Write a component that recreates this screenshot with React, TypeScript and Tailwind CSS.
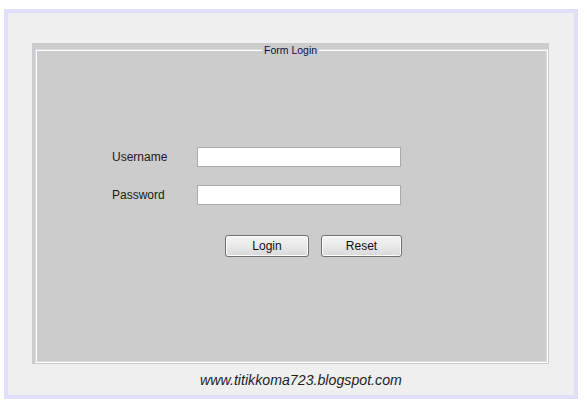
import React from 'react';

const font = { fontFamily: '"Liberation Sans", Arial, sans-serif' };

function Field ({ label, type }: { label: string; type: string })
{
  return (
    <div className="flex items-center">
      <label className="w-[85px] text-[12px] text-[#1a1a1a]">{label}</label>
      <input
        type={type}
        className="w-[204px] h-[20px] border border-[#a9a9b1] bg-white outline-none px-1 text-[12px]"
      />
    </div>
  );
}

function Button ({ children, width }: { children: React.ReactNode; width: string })
{
  return (
    <button
      className={`${width} h-[22px] rounded-[3px] border border-[#707070] bg-gradient-to-b from-[#f4f4f4] via-[#e9e9e9] to-[#d9d9d9] shadow-[inset_0_0_0_1px_#fcfcfc] text-[12px] leading-[18px] text-[#111]`}
    >
      {children}
    </button>
  );
}

export default function App ()
{
  return (
    <div className="w-[587px] h-[409px] bg-white pt-[9px] pl-[4px]" style={font}>
      <div className="w-[574px] h-[390px] border-4 border-[#dfdffc] bg-[#efefef] pt-[30px] pl-[24px]">
        <div className="w-[517px] h-[321px] bg-[#cccccc] pt-[6px] pl-[3px]">
          {/* etched frame */}
          <div className="relative w-[513px] h-[314px] border-t border-l border-[#d3dde3] border-r-white border-b-white border-r border-b">
            <div className="w-full h-full border-t border-l border-white border-r border-b border-r-[#d3dde3] border-b-[#d3dde3]">
              <div className="pt-[96px] pl-[75px]">
                <Field label="Username" type="text" />
                <div className="mt-[18px]">
                  <Field label="Password" type="password" />
                </div>
                <div className="mt-[30px] pl-[113px] flex gap-[12px]">
                  <Button width="w-[84px]">Login</Button>
                  <Button width="w-[81px]">Reset</Button>
                </div>
              </div>
            </div>

            <span className="absolute top-[-6px] left-[226px] bg-[#cccccc] px-[2px] text-[10.5px] leading-[13px] text-[#10103a]">
              Form Login
            </span>
          </div>
        </div>

        <p className="mt-[8px] ml-[168px] text-[14.2px] italic text-[#1e1e1e] leading-[16px]">
          www.titikkoma723.blogspot.com
        </p>
      </div>
    </div>
  );
}
